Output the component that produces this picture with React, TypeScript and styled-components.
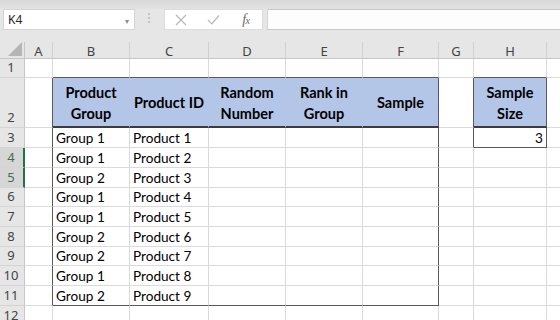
import React from 'react';
import styled, { createGlobalStyle, css } from 'styled-components';

const GlobalStyle = createGlobalStyle`
  html, body { margin: 0; padding: 0; background: #ffffff; }
  body { width: 560px; height: 320px; overflow: hidden; font-family: Lato, "Liberation Sans", sans-serif; }
  * { box-sizing: border-box; }
`;

const Window = styled.div`
  width: 560px;
  height: 320px;
  overflow: hidden;
  display: flex;
  flex-direction: column;
  background: #e6e6e6;
`;

const Toolbar = styled.div`
  flex: none;
  height: 42px;
  padding-top: 9px;
  display: flex;
  align-items: flex-start;
  background: linear-gradient(#d9d9d9 0px, #e3e3e3 9px, #e6e6e6 9px);
`;

const NameBox = styled.div`
  margin-left: 3px;
  width: 132px;
  height: 21px;
  background: #ffffff;
  border: 1px solid #d4d4d4;
  display: flex;
  align-items: center;
  justify-content: space-between;
  padding: 0 5px 0 4px;
  font-family: "Noto Sans", "Open Sans", sans-serif;
  font-size: 12px;
  color: #262626;
`;

const Caret = styled.span`
  font-size: 8px;
  color: #8a8a8a;
  margin-top: 1px;
`;

const Dots = styled.div`
  margin-left: 13px;
  margin-top: 4px;
  width: 3px;
  display: flex;
  flex-direction: column;
  gap: 2px;
  & > span {
    width: 2px;
    height: 2px;
    background: #b9b9b9;
    border-radius: 1px;
  }
`;

const FxBox = styled.div`
  margin-left: 13px;
  width: 99px;
  height: 21px;
  background: #ffffff;
  border: 1px solid #dcdcdc;
  display: flex;
  align-items: center;
`;

const IconSlot = styled.div`
  width: 34px;
  height: 100%;
  display: flex;
  align-items: center;
  justify-content: center;
`;

const FxText = styled.span`
  font-family: "Liberation Serif", "DejaVu Serif", serif;
  font-style: italic;
  font-size: 14px;
  color: #6a6a6a;
  letter-spacing: -0.5px;
  & > small {
    font-size: 10px;
  }
`;

const FormulaInput = styled.div`
  margin-left: 4px;
  flex: 1;
  height: 21px;
  background: #fdfdfd;
  border-top: 1px solid #c8c8c8;
  border-bottom: 1px solid #c8c8c8;
  border-left: 1px solid #d4d4d4;
`;

const Sheet = styled.div`
  flex: 1;
  display: grid;
  grid-template-columns: 25px 28px 77px 79px 77px 77px 76px 35px 73px 60px;
  grid-template-rows: 17px 19px 50px 20px 20px 20px 19px 20px 20px 19px 20px 20px 20px;
  background: #ffffff;
`;

const Corner = styled.div`
  background: #e6e6e6;
  border-right: 1px solid #c6c6c6;
  border-bottom: 1px solid #c6c6c6;
  display: flex;
  align-items: flex-end;
  justify-content: flex-end;
  padding: 0 2px 2px 0;
`;

const ColHead = styled.div`
  background: #e6e6e6;
  border-right: 1px solid #d0d0d0;
  border-bottom: 1px solid #c6c6c6;
  display: flex;
  align-items: center;
  justify-content: center;
  font-family: "Noto Sans", "Open Sans", sans-serif;
  font-size: 13px;
  color: #444444;
  padding-top: 1px;
`;

const RowHead = styled.div<{ $active?: boolean }>`
  background: ${(p) => (p.$active ? '#d6d6d6' : '#e6e6e6')};
  border-right: ${(p) => (p.$active ? '2px solid #217346' : '1px solid #c6c6c6')};
  border-bottom: 1px solid #d4d4d4;
  display: flex;
  align-items: flex-end;
  justify-content: center;
  padding-bottom: 1px;
  padding-right: ${(p) => (p.$active ? '1px' : '2px')};
  font-family: "Noto Sans", "Open Sans", sans-serif;
  font-size: 13px;
  line-height: 17px;
  color: ${(p) => (p.$active ? '#3f6f50' : '#444444')};
`;

type Edge = 'grid' | 'dark' | 'thick' | 'fill';

const edge = (e: Edge) => {
  switch (e) {
    case 'dark':
      return '1px solid #5a5a5a';
    case 'thick':
      return '2px solid #3c3c3c';
    case 'fill':
      return '1px solid #b4c6e7';
    default:
      return '1px solid #dadada';
  }
};

const Cell = styled.div<{ $right: Edge; $bottom: Edge; $head?: boolean; $fill?: boolean; $align?: 'left' | 'right' }>`
  border-right: ${(p) => edge(p.$right)};
  border-bottom: ${(p) => edge(p.$bottom)};
  background: ${(p) => (p.$fill ? '#b4c6e7' : '#ffffff')};
  display: flex;
  padding: 0 3px;
  color: #000000;
  white-space: nowrap;
  ${(p) =>
    p.$head
      ? css`
          align-items: center;
          justify-content: center;
          text-align: center;
          font-weight: 700;
          font-size: 14.5px;
          line-height: 21px;
          padding-top: 1px;
        `
      : css`
          align-items: flex-end;
          justify-content: ${p.$align === 'right' ? 'flex-end' : 'flex-start'};
          font-size: 13.6px;
          line-height: 17px;
          padding-bottom: 0px;
        `}
`;

const COLS = ['A', 'B', 'C', 'D', 'E', 'F', 'G', 'H', 'I'];

const headers: Record<string, React.ReactNode> = {
  B: (<>Product<br />Group</>),
  C: 'Product ID',
  D: (<>Random<br />Number</>),
  E: (<>Rank in<br />Group</>),
  F: 'Sample',
  H: (<>Sample<br />Size</>),
};

const data: [string, string][] = [
  ['Group 1', 'Product 1'],
  ['Group 1', 'Product 2'],
  ['Group 2', 'Product 3'],
  ['Group 1', 'Product 4'],
  ['Group 1', 'Product 5'],
  ['Group 2', 'Product 6'],
  ['Group 2', 'Product 7'],
  ['Group 1', 'Product 8'],
  ['Group 2', 'Product 9'],
];

interface Spec {
  text?: React.ReactNode;
  head?: boolean;
  fill?: boolean;
  align?: 'left' | 'right';
  right: Edge;
  bottom: Edge;
}

function specFor(row: number, c: number): Spec {
  const s: Spec = { right: 'grid', bottom: 'grid' };
  const inTableCol = c >= 1 && c <= 5;
  const col = COLS[c];
  if (c === 0 && row >= 2 && row <= 11) s.right = 'dark';
  if (row === 1 && (inTableCol || c === 7)) s.bottom = 'dark';
  if (row === 2 && inTableCol) {
    s.fill = true;
    s.head = true;
    s.bottom = 'thick';
    s.right = c < 5 ? 'fill' : 'dark';
    s.text = headers[col];
  }
  if (row >= 3 && row <= 11 && c === 5) s.right = 'dark';
  if (row === 11 && inTableCol) s.bottom = 'dark';
  if ((row === 2 || row === 3) && c === 6) s.right = 'dark';
  if (row === 2 && c === 7) {
    s.fill = true;
    s.head = true;
    s.bottom = 'thick';
    s.right = 'dark';
    s.text = headers.H;
  }
  if (row === 3 && c === 7) {
    s.right = 'dark';
    s.bottom = 'dark';
    s.align = 'right';
    s.text = '3';
  }
  if (row >= 3 && row <= 11 && (c === 1 || c === 2)) {
    s.text = data[row - 3][c - 1];
  }
  return s;
}

const XIcon = () => (
  <svg width="12" height="12" viewBox="0 0 12 12">
    <path d="M1 1 L11 11 M11 1 L1 11" stroke="#b8b8b8" strokeWidth="1.2" fill="none" />
  </svg>
);

const CheckIcon = () => (
  <svg width="13" height="11" viewBox="0 0 13 11">
    <path d="M1 6 L4.8 9.8 L12 1.5" stroke="#b8b8b8" strokeWidth="1.2" fill="none" />
  </svg>
);

const CornerTriangle = () => (
  <svg width="14" height="14" viewBox="0 0 14 14">
    <polygon points="14,0 14,14 0,14" fill="#b5b5b5" />
  </svg>
);

const ROWS = [1, 2, 3, 4, 5, 6, 7, 8, 9, 10, 11, 12];

export default function App() {
  return (
    <Window>
      <GlobalStyle />
      <Toolbar>
        <NameBox>
          <span>K4</span>
          <Caret>▾</Caret>
        </NameBox>
        <Dots>
          <span />
          <span />
          <span />
        </Dots>
        <FxBox>
          <IconSlot>
            <XIcon />
          </IconSlot>
          <IconSlot>
            <CheckIcon />
          </IconSlot>
          <IconSlot>
            <FxText>
              f<small>x</small>
            </FxText>
          </IconSlot>
        </FxBox>
        <FormulaInput />
      </Toolbar>
      <Sheet>
        <Corner>
          <CornerTriangle />
        </Corner>
        {COLS.map((c) => (
          <ColHead key={c}>{c}</ColHead>
        ))}
        {ROWS.map((r) => (
          <React.Fragment key={r}>
            <RowHead $active={r === 4 || r === 5}>{r}</RowHead>
            {COLS.map((col, ci) => {
              const s = specFor(r, ci);
              return (
                <Cell key={col} $right={s.right} $bottom={s.bottom} $head={s.head} $fill={s.fill} $align={s.align}>
                  {s.text}
                </Cell>
              );
            })}
          </React.Fragment>
        ))}
      </Sheet>
    </Window>
  );
}
